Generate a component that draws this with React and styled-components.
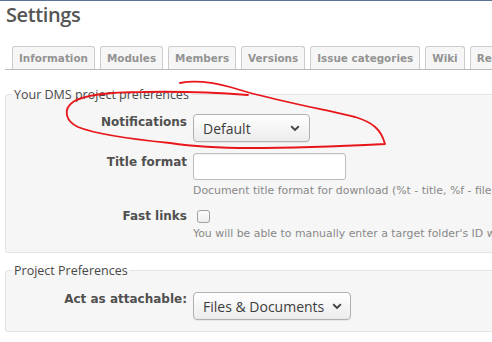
import React from 'react';
import styled, { createGlobalStyle } from 'styled-components';

const GlobalStyle = createGlobalStyle`
  html, body {
    margin: 0;
    padding: 0;
    overflow: hidden;
    background: #fff;
  }
  body {
    font-family: 'DejaVu Sans', Verdana, sans-serif;
    font-size: 12px;
    color: #505050;
  }
`;

const Page = styled.div`
  position: relative;
  border-top: 1px solid #5a7496;
  width: 640px;
  height: 341px;
`;

const Content = styled.div`
  padding-left: 5px;
`;

const Title = styled.h2`
  margin: 0;
  padding: 1px 0 0 1px;
  font-family: 'Open Sans', sans-serif;
  font-weight: 600;
  font-size: 20px;
  letter-spacing: -0.4px;
  line-height: 26px;
  color: #555;
`;

const Tabs = styled.ul`
  display: flex;
  gap: 5px;
  margin: 18px 0 0;
  padding: 0 0 0 7px;
  list-style: none;
  border-bottom: 1px solid #bbb;
`;

const Tab = styled.li`
  padding: 4px 6px;
  border: 1px solid #ccc;
  border-bottom: 0;
  border-radius: 3px 3px 0 0;
  background: #f6f6f6;
  color: #939393;
  font-weight: bold;
  font-size: 10.4px;
  line-height: 14px;
  white-space: nowrap;
`;

const Box = styled.fieldset`
  margin: ${(p) => p.$top}px 0 0;
  padding: ${(p) => p.$padTop}px 6px 11px;
  background: #f6f6f6;
  border: 1px solid #e4e4e4;
  border-radius: 3px;
`;

const Legend = styled.legend`
  padding: 0 2px;
  font-family: 'Open Sans', sans-serif;
  font-size: 12.5px;
  line-height: 15px;
  color: #484848;
`;

const Row = styled.div`
  display: flex;
  align-items: flex-start;
  margin-top: ${(p) => p.$top || 0}px;
`;

const Label = styled.label`
  flex: 0 0 175px;
  margin-right: 6px;
  padding-top: ${(p) => p.$pad ?? 1}px;
  text-align: right;
  font-weight: bold;
  font-size: 12px;
  line-height: 15px;
  color: #505050;
`;

const Help = styled.div`
  margin: ${(p) => p.$top}px 0 0 181px;
  font-size: 10.9px;
  line-height: 14px;
  color: #888;
  white-space: nowrap;
`;

const SelectWrap = styled.div`
  position: relative;
  width: ${(p) => p.$width}px;
  height: 28px;
`;

const Select = styled.select`
  appearance: none;
  box-sizing: border-box;
  width: 100%;
  height: 100%;
  padding: 0 24px 0 9px;
  border: 1px solid #b0b0b0;
  border-radius: 4px;
  background: linear-gradient(#ffffff, #ececec);
  box-shadow: 0 1px 1px rgba(0, 0, 0, 0.06);
  font-family: 'Open Sans', sans-serif;
  font-size: 14px;
  color: #3c3c3c;
`;

const Chevron = styled.svg`
  position: absolute;
  right: ${(p) => p.$right}px;
  top: 11px;
  pointer-events: none;
`;

const TextInput = styled.input`
  box-sizing: border-box;
  width: 153px;
  height: 27px;
  border: 1px solid #bdbdbd;
  border-radius: 3px;
  background: #fff;
  box-shadow: inset 0 1px 1px rgba(0, 0, 0, 0.05);
`;

const Check = styled.input`
  appearance: none;
  box-sizing: border-box;
  width: 13px;
  height: 13px;
  margin: 2px 0 0 4px;
  border: 1px solid #a0a0a0;
  border-radius: 3px;
  background: linear-gradient(#fdfdfd, #ededed);
`;

const Scribble = styled.svg`
  position: absolute;
  top: 0;
  left: 0;
  pointer-events: none;
`;

function Dropdown({ value, width, chevronRight = 10 }) {
  return (
    <SelectWrap $width={width}>
      <Select defaultValue={value}>
        <option>{value}</option>
      </Select>
      <Chevron $right={chevronRight} width="10" height="7" viewBox="0 0 10 7">
        <path d="M1.2 1.3 L5 5 L8.8 1.3" fill="none" stroke="#444" strokeWidth="1.9" />
      </Chevron>
    </SelectWrap>
  );
}

const tabs = ['Information', 'Modules', 'Members', 'Versions', 'Issue categories', 'Wiki', 'Repository'];

export default function App() {
  return (
    <Page>
      <GlobalStyle />
      <Content>
        <Title>Settings</Title>
        <Tabs>
          {tabs.map((t) => (
            <Tab key={t}>{t}</Tab>
          ))}
        </Tabs>

        <Box $top={17} $padTop={12}>
          <Legend>Your DMS project preferences</Legend>
          <Row>
            <Label>Notifications</Label>
            <Dropdown value="Default" width={117} chevronRight={10} />
          </Row>
          <Row $top={11}>
            <Label $pad={2}>Title format</Label>
            <TextInput type="text" />
          </Row>
          <Help $top={4}>Document title format for download (%t - title, %f - file name, %v - version, %i - id)</Help>
          <Row $top={10}>
            <Label>Fast links</Label>
            <Check type="checkbox" />
          </Row>
          <Help $top={3}>You will be able to manually enter a target folder's ID when moving or linking</Help>
        </Box>

        <Box $top={10} $padTop={14}>
          <Legend>Project Preferences</Legend>
          <Row>
            <Label $pad={0}>Act as attachable:</Label>
            <Dropdown value="Files & Documents" width={158} chevronRight={9} />
          </Row>
        </Box>
      </Content>

      <Scribble width="492" height="342" viewBox="0 0 492 342">
        <path
          d="M180 82 C195 79 215 82 230 86 L247 91 C275 99 330 110 355 116 C372 121 381 128 385 143 C345 145 290 147 250 147 C215 147 190 145 170 142 C130 138 95 133 78 126 C65 120 63 108 73 101 C84 94 112 91 143 91 C185 90 222 92 248 94"
          fill="none"
          stroke="#e8161b"
          strokeWidth="1.8"
          strokeLinecap="round"
          strokeLinejoin="round"
        />
      </Scribble>
    </Page>
  );
}
